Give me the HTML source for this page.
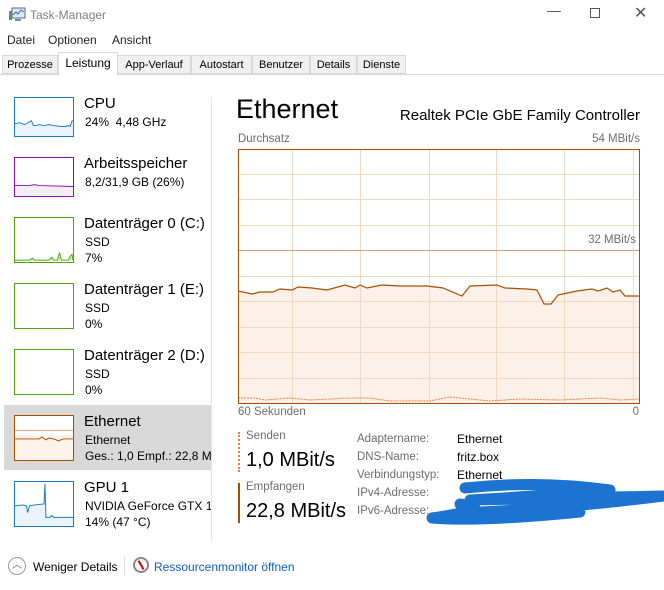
<!DOCTYPE html>
<html><head><meta charset="utf-8"><style>
*{margin:0;padding:0;box-sizing:border-box}
body{width:664px;height:590px;background:#fff;font-family:"Liberation Sans",sans-serif;position:relative;overflow:hidden;color:#000}
.a{position:absolute;white-space:nowrap}
.thumb{position:absolute;left:14px;width:60px;height:40px;border:1px solid}
.t1{position:absolute;left:84px;font-size:15px;white-space:nowrap;width:127px;overflow:hidden}
.t2{position:absolute;left:85px;font-size:12px;line-height:16px;white-space:nowrap;width:126px;overflow:hidden}
.tab{position:absolute;top:55px;height:19px;border:1px solid #d9d9d9;background:#f0f0f0;font-size:11px;padding:3px 0 0;text-align:center;white-space:nowrap;overflow:hidden}
.lbl{color:#6d6d6d;font-size:11.5px}
</style></head><body>
<svg class="a" style="left:8px;top:7px" width="18" height="15"><rect x="4" y="1" width="13" height="10" fill="#dfe9f5" stroke="#4a6f96"/><polyline points="5,8 8,5 10,7 13,3 16,5" fill="none" stroke="#2a6fc0"/><rect x="1" y="4" width="3" height="9" fill="#6a8a6a"/><rect x="7" y="12" width="6" height="2" fill="#888"/></svg>
<div class="a" style="left:30px;top:8px;font-size:12px;color:#808080">Task-Manager</div>
<div class="a" style="left:547px;top:2px;font-size:14px;color:#555">—</div>
<div class="a" style="left:590px;top:8px;width:10px;height:10px;border:1px solid #555"></div>
<div class="a" style="left:634px;top:3px;font-size:16px;color:#555">✕</div>
<div class="a" style="left:7px;top:33px;font-size:12px;color:#222">Datei</div>
<div class="a" style="left:48px;top:33px;font-size:12px;color:#222">Optionen</div>
<div class="a" style="left:112px;top:33px;font-size:12px;color:#222">Ansicht</div>
<div class="a" style="left:0;top:74px;width:664px;height:1px;background:#d9d9d9"></div>
<div class="tab" style="left:2px;width:56px">Prozesse</div>
<div class="tab" style="left:58px;top:52px;height:23px;width:60px;background:#fff;border-bottom:none;font-size:12px">Leistung</div>
<div class="tab" style="left:117px;width:74px">App-Verlauf</div>
<div class="tab" style="left:191px;width:61px">Autostart</div>
<div class="tab" style="left:252px;width:58px">Benutzer</div>
<div class="tab" style="left:310px;width:47px">Details</div>
<div class="tab" style="left:357px;width:49px">Dienste</div>

<div class="a" style="left:211px;top:97px;width:1px;height:445px;background:#e6e6e6"></div>
<div class="a" style="left:4px;top:405px;width:207px;height:65px;background:#d9d9d9"></div>

<svg class="thumb" style="top:97px;border-color:#1a7ac4;background:#fff" viewBox="0 0 60 40" preserveAspectRatio="none"><polygon points="0,27 5,26 10,28 15,25 17,24 19,29 22,29 25,28 30,29 35,28 40,29 48,30 52,30 55,29 57,30 59,24 60,24 60,40 0,40" fill="#eaf3fb"/><polyline points="0,27 5,26 10,28 15,25 17,24 19,29 22,29 25,28 30,29 35,28 40,29 48,30 52,30 55,29 57,30 59,24 60,24" fill="none" stroke="#1a7ac4"/></svg>
<div class="t1" style="top:95px">CPU</div><div class="t2" style="top:114px">24%&nbsp; 4,48 GHz</div>

<svg class="thumb" style="top:157px;border-color:#8b12ae" viewBox="0 0 60 40" preserveAspectRatio="none"><rect x="0" y="29" width="60" height="11" fill="#f3eef4"/><polyline points="0,29 15,29 20,28 25,29 60,30" fill="none" stroke="#8b12ae"/></svg>
<div class="t1" style="top:155px">Arbeitsspeicher</div><div class="t2" style="top:174px">8,2/31,9 GB (26%)</div>

<svg class="thumb" style="top:217px;height:46px;border-color:#4da60c" viewBox="0 0 60 46" preserveAspectRatio="none"><polyline points="0,44 15,44 18,42 20,44 35,44 38,41 40,44 44,44 46,36 48,44 55,44 57,40 59,38 60,44" fill="#cfe7b8" stroke="#4da60c"/></svg>
<div class="t1" style="top:215px">Datenträger 0 (C:)</div><div class="t2" style="top:234px">SSD<br>7%</div>

<div class="thumb" style="top:283px;height:46px;border-color:#4da60c"></div>
<div class="t1" style="top:281px">Datenträger 1 (E:)</div><div class="t2" style="top:300px">SSD<br>0%</div>
<div class="thumb" style="top:349px;height:46px;border-color:#4da60c"></div>
<div class="t1" style="top:347px">Datenträger 2 (D:)</div><div class="t2" style="top:366px">SSD<br>0%</div>

<svg class="thumb" style="top:415px;height:46px;border-color:#a74f01;background:#fff" viewBox="0 0 60 46" preserveAspectRatio="none"><rect x="0" y="20" width="60" height="26" fill="#fcf3ea"/><line x1="0" y1="15" x2="60" y2="15" stroke="#d7a77a"/><polyline points="0,24 25,24 28,22 32,25 35,23 40,24 45,26 50,24 60,24" fill="none" stroke="#a74f01"/></svg>
<div class="t1" style="top:413px">Ethernet</div><div class="t2" style="top:432px">Ethernet<br>Ges.: 1,0 Empf.: 22,8 MB</div>

<svg class="thumb" style="top:481px;height:46px;border-color:#1a7ac4;background:#fff" viewBox="0 0 60 46" preserveAspectRatio="none"><polygon points="0,25 8,24 12,25 13,32 15,25 20,24 30,23 31,2 32,37 36,37 38,35 40,37 60,37 60,46 0,46" fill="#eaf3fb"/><polyline points="0,25 8,24 12,25 13,32 15,25 20,24 30,23 31,2 32,37 36,37 38,35 40,37 60,37" fill="none" stroke="#1a7ac4"/></svg>
<div class="t1" style="top:479px">GPU 1</div><div class="t2" style="top:498px">NVIDIA GeForce GTX 1660<br>14% (47 °C)</div>

<div class="a" style="left:236px;top:94px;font-size:27px">Ethernet</div>
<div class="a" style="right:24px;top:107px;font-size:15px">Realtek PCIe GbE Family Controller</div>
<div class="a lbl" style="left:238px;top:133px">Durchsatz</div>
<div class="a lbl" style="right:24px;top:133px">54 MBit/s</div>

<svg class="a" style="left:238px;top:149px" width="402" height="255" viewBox="238 149 402 255">
<rect x="238" y="149" width="402" height="255" fill="#fff"/>
<polygon points="238,291 252,294 260,292 273,292 280,289 292,290 298,287 312,288 327,290 345,285 355,288 360,285 367,288 382,285 400,286 427,286 443,288 462,296 470,286 497,285 505,288 527,289 537,290 544,304 551,304 558,295 577,291 592,289 598,291 607,288 613,292 620,290 625,296 639,296 639,403 238,403" fill="#fbf1e8"/>
<g stroke="#f0d8c2" stroke-width="1">
<line x1="238" y1="174.5" x2="640" y2="174.5"/><line x1="238" y1="199.5" x2="640" y2="199.5"/><line x1="238" y1="225.5" x2="640" y2="225.5"/><line x1="238" y1="301.5" x2="640" y2="301.5"/><line x1="238" y1="276.5" x2="640" y2="276.5"/><line x1="238" y1="327.5" x2="640" y2="327.5"/><line x1="238" y1="352.5" x2="640" y2="352.5"/><line x1="238" y1="378.5" x2="640" y2="378.5"/>
<line x1="292.5" y1="149" x2="292.5" y2="403"/><line x1="360.5" y1="149" x2="360.5" y2="403"/><line x1="429.5" y1="149" x2="429.5" y2="403"/><line x1="496.5" y1="149" x2="496.5" y2="403"/><line x1="564.5" y1="149" x2="564.5" y2="403"/><line x1="633.5" y1="149" x2="633.5" y2="403"/>
</g>
<line x1="238" y1="250.5" x2="640" y2="250.5" stroke="#d4a57c"/>
<polyline points="238,291 252,294 260,292 273,292 280,289 292,290 298,287 312,288 327,290 345,285 355,288 360,285 367,288 382,285 400,286 427,286 443,288 462,296 470,286 497,285 505,288 527,289 537,290 544,304 551,304 558,295 577,291 592,289 598,291 607,288 613,292 620,290 625,296 639,296" fill="none" stroke="#a74f01" stroke-width="1.2"/>
<polyline points="238,398 255,398 265,400 290,398 310,400 350,398 370,398 390,401 430,401 450,397 470,399 490,401 520,399 560,400 600,398 620,400 639,399" fill="none" stroke="#e8804a" stroke-dasharray="2,1"/>
<rect x="238.5" y="149.5" width="401" height="254" fill="none" stroke="#a74f01"/>
</svg>
<div class="a lbl" style="right:28px;top:234px">32 MBit/s</div>
<div class="a lbl" style="left:238px;top:406px">60 Sekunden</div>
<div class="a lbl" style="right:25px;top:406px">0</div>

<div class="a" style="left:238px;top:432px;height:40px;border-left:2px dotted #e8804a"></div>
<div class="a lbl" style="left:246px;top:430px">Senden</div>
<div class="a" style="left:246px;top:449px;font-size:20px">1,0 MBit/s</div>
<div class="a" style="left:238px;top:483px;height:40px;width:2px;background:#a74f01"></div>
<div class="a lbl" style="left:246px;top:481px">Empfangen</div>
<div class="a" style="left:246px;top:500px;font-size:20px">22,8 MBit/s</div>

<div class="a lbl" style="left:357px;top:430px;line-height:18px">Adaptername:<br>DNS-Name:<br>Verbindungstyp:<br>IPv4-Adresse:<br>IPv6-Adresse:</div>
<div class="a" style="left:457px;top:430px;font-size:12px;line-height:18px">Ethernet<br>fritz.box<br>Ethernet</div>
<svg class="a" style="left:420px;top:478px" width="244" height="50"><path d="M45,10 Q120,2 190,12 Q120,18 50,22 Q150,20 243,18 Q150,30 60,34 Q120,36 160,34 Q60,44 12,40 Q80,30 40,26" fill="none" stroke="#1c73d0" stroke-width="11" stroke-linecap="round" stroke-linejoin="round"/></svg>

<div class="a" style="left:8px;top:557px;width:18px;height:18px;border:1px solid #999;border-radius:50%;font-size:10px;text-align:center;line-height:16px;color:#666">︿</div>
<div class="a" style="left:33px;top:560px;font-size:12px">Weniger Details</div>
<div class="a" style="left:124px;top:557px;width:1px;height:18px;background:#ddd"></div>
<div class="a" style="left:133px;top:557px;width:16px;height:16px;border:2px solid #888;border-radius:50%;background:#fff"><div style="position:absolute;left:5px;top:1px;width:2px;height:10px;background:#c00;transform:rotate(-30deg)"></div></div>
<div class="a" style="left:154px;top:560px;font-size:12px;color:#0a5ec4">Ressourcenmonitor öffnen</div>
</body></html>
